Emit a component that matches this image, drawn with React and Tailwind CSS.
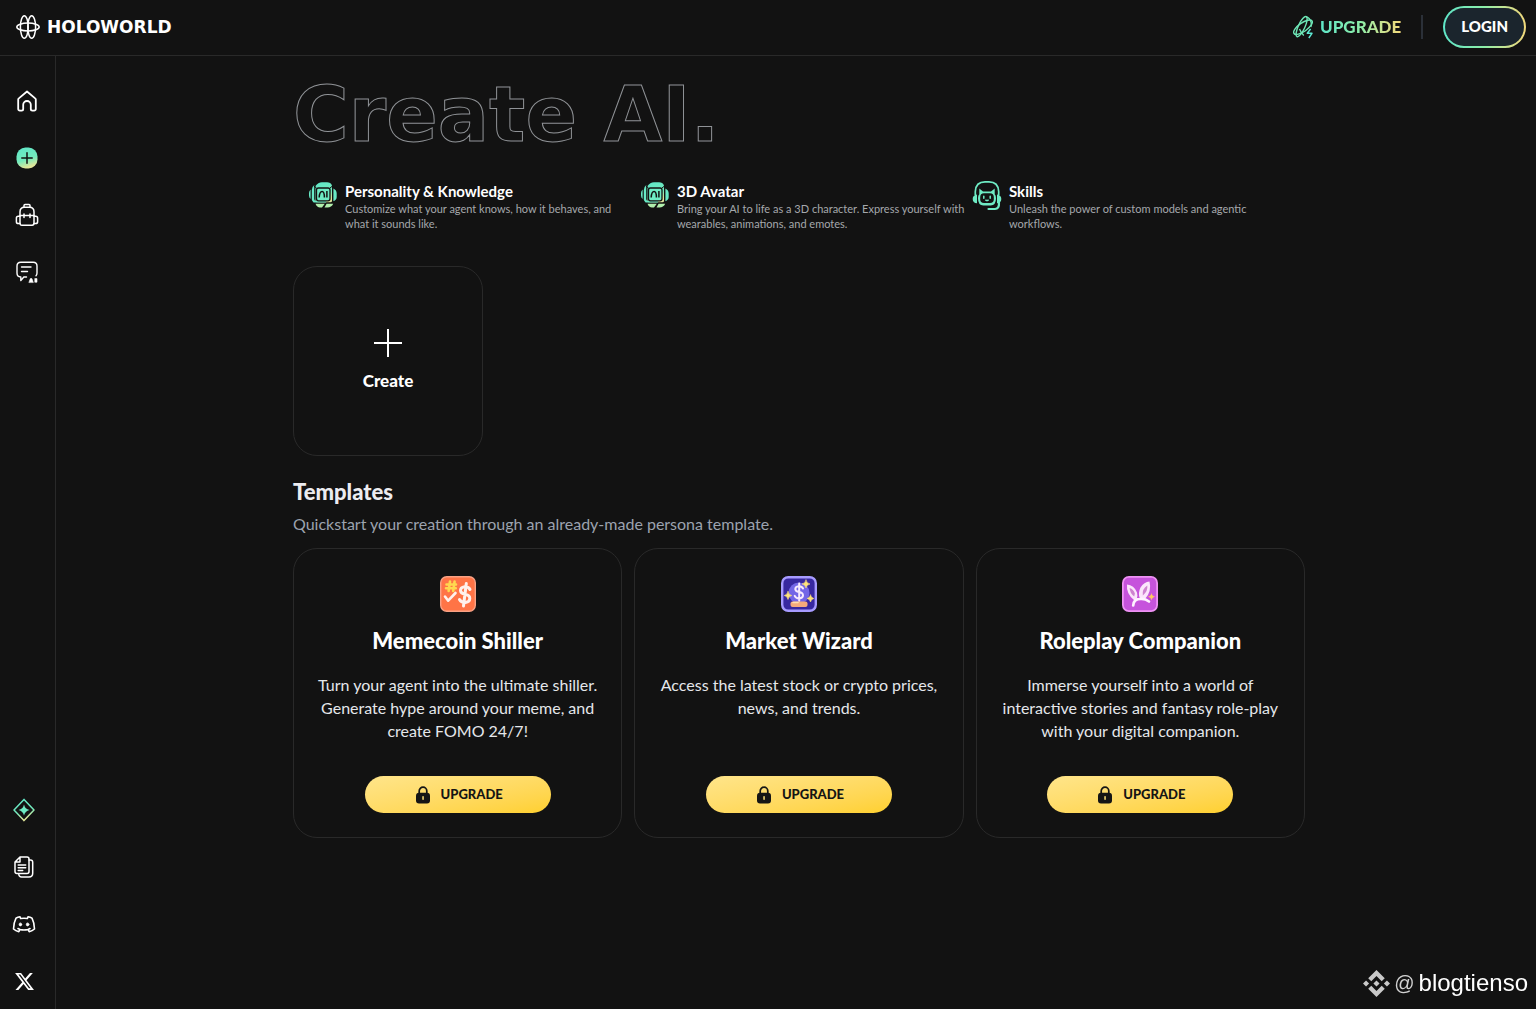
import React from "react";
import { FaXTwitter } from "react-icons/fa6";
import { SiBinance } from "react-icons/si";

const features = [
  {
    title: "Personality & Knowledge",
    text: "Customize what your agent knows, how it behaves, and what it sounds like.",
    Icon: ChipIcon,
  },
  {
    title: "3D Avatar",
    text: "Bring your AI to life as a 3D character. Express yourself with wearables, animations, and emotes.",
    Icon: ChipIcon,
  },
  {
    title: "Skills",
    text: "Unleash the power of custom models and agentic workflows.",
    Icon: BotIcon,
  },
];

const templates = [
  {
    title: "Memecoin Shiller",
    text: "Turn your agent into the ultimate shiller. Generate hype around your meme, and create FOMO 24/7!",
    Icon: MemecoinIcon,
  },
  {
    title: "Market Wizard",
    text: "Access the latest stock or crypto prices, news, and trends.",
    Icon: WizardIcon,
  },
  {
    title: "Roleplay Companion",
    text: "Immerse yourself into a world of interactive stories and fantasy role-play with your digital companion.",
    Icon: BunnyIcon,
  },
];

function Gradients() {
  return (
    <svg className="absolute h-0 w-0" aria-hidden="true">
      <defs>
        <linearGradient id="mint" x1="0" y1="0" x2="0.3" y2="1">
          <stop offset="0" stopColor="#5ee6c8" />
          <stop offset="0.65" stopColor="#74ebbd" />
          <stop offset="1" stopColor="#dfe69a" />
        </linearGradient>
      </defs>
    </svg>
  );
}

function LogoMark() {
  return (
    <svg className="h-6 w-6" viewBox="0 0 24 24" fill="none" stroke="white" strokeWidth="1.5">
      <ellipse cx="8.3" cy="12" rx="3.9" ry="11.2" />
      <ellipse cx="15.7" cy="12" rx="3.9" ry="11.2" />
      <ellipse cx="12" cy="12" rx="11.2" ry="4" />
    </svg>
  );
}

function UpgradeMark() {
  return (
    <svg className="h-6 w-6" viewBox="0 0 24 24" fill="none" stroke="#6ee7b7" strokeWidth="1.4">
      <ellipse cx="11" cy="12.2" rx="11" ry="4.3" transform="rotate(-35 11 12.2)" />
      <ellipse cx="9.6" cy="11.600" rx="3.3" ry="11" transform="rotate(25 9.600 11.600)" />
      <path d="M14.200 1.600Q18 3 19.200 7.500q.5 2.500-.4 4.500M11.800 20.500q-2.600-2.200-4.300-6.500" />
      <path d="M18.600 14l-3.400 4.300h4.800L16.800 23" strokeLinejoin="round" stroke="#5eead4" />
    </svg>
  );
}

function HomeIcon() {
  return (
    <svg className="h-6 w-6" viewBox="0 0 24 24" fill="none" stroke="white" strokeWidth="1.8" strokeLinejoin="round">
      <path d="M12 2.500L3.800 9.400a1.500 1.500 0 0 0-.6 1.200V20a1.600 1.600 0 0 0 1.600 1.600h1.800A1.600 1.600 0 0 0 8.200 20v-4.200a3.800 3.800 0 0 1 7.600 0V20a1.600 1.600 0 0 0 1.600 1.600h1.800a1.600 1.600 0 0 0 1.600-1.600v-9.400a1.500 1.500 0 0 0-.6-1.200z" />
    </svg>
  );
}

function AddIcon() {
  return (
    <svg className="h-6 w-6" viewBox="0 0 24 24">
      <rect x="1.500" y="1.500" width="21" height="21" rx="9" fill="url(#mint)" />
      <path d="M12 6.800v10.400M6.800 12h10.400" stroke="#121212" strokeWidth="1.500" strokeLinecap="round" />
    </svg>
  );
}

function BackpackIcon() {
  return (
    <svg className="h-6 w-6" viewBox="0 0 24 24" fill="none" stroke="white" strokeWidth="1.500" strokeLinejoin="round" strokeLinecap="round">
      <path d="M9 4.200V2.400q0-1 1-1h4q1 0 1 1v1.800" />
      <path d="M5 20.300V9q0-4.800 4.500-4.800h5Q19 4.200 19 9v11.300q0 1.900-1.900 1.900H6.900Q5 22.200 5 20.300z" />
      <path d="M5 13.200H3.300q-1.900 0-1.900 1.900v3.600q0 1.900 1.900 1.900H5M19 13.200h1.700q1.900 0 1.900 1.900v3.600q0 1.900-1.900 1.900H19" />
      <path d="M5 12.500h14M9 11v3.400M15 11v3.400" />
    </svg>
  );
}

function ChatIcon() {
  return (
    <svg className="h-6 w-6" viewBox="0 0 24 24" fill="none" stroke="white" strokeWidth="1.400" strokeLinejoin="round" strokeLinecap="round">
      <path d="M11.500 17H8.800l-3 3.600V17Q2 16.800 2 13V6q0-3.800 3.800-3.800h12.400Q22 2.200 22 6v7q0 1.800-1 2.800M6.500 7h9.500M6.500 11.500h6" />
      <path d="M14 22.200l1.300-3.600h1.600l1.300 3.600zM20 18.600h2v3.600h-2z" fill="white" strokeWidth=".6" />
    </svg>
  );
}

function DiamondIcon() {
  return (
    <svg className="h-6 w-6" viewBox="0 0 24 24" fill="none">
      <path d="M12 1.400L22 12 12 22.600 2 12z" stroke="url(#mint)" strokeWidth="1.500" strokeLinejoin="round" />
      <path d="M12 6.500q1 4.500 5.500 5.500-4.500 1-5.500 5.500-1-4.500-5.500-5.500 4.500-1 5.500-5.500z" fill="#6eebc4" />
    </svg>
  );
}

function DocsIcon() {
  return (
    <svg className="h-6 w-6" viewBox="0 0 24 24" fill="none" stroke="white" strokeWidth="1.500" strokeLinejoin="round" strokeLinecap="round">
      <path d="M8 2h7q2 0 2 2v12.500q0 2-2 2H5q-2 0-2-2V7zM8 2v5H3" />
      <path d="M17 5h1.500q2.200 0 2.200 2.200v11q0 3.700-3.700 3.700H9.500Q7 21.900 6.800 19.500" />
      <path d="M6.200 10h7.500M6.200 12.800h7.500M6.200 15.600h4.500" />
    </svg>
  );
}

function DiscordIcon() {
  return (
    <svg className="h-6 w-6" viewBox="0 0 24 24" fill="none" stroke="white" strokeWidth="1.600" strokeLinejoin="round" strokeLinecap="round">
      <path d="M8.600 6.500L8 4.800q-2.300.3-4 1.400-2.400 4.800-2.500 10.800 2.200 2 5.300 2.700l1.200-2.200q4 1 8 0l1.200 2.200q3.100-.7 5.300-2.700-.1-6-2.500-10.800-1.700-1.100-4-1.400l-.6 1.700q-3.400-.6-6.800 0zM8 17.500l-2-.9M16 17.500l2-.9" />
      <ellipse cx="8.400" cy="12.400" rx="1.300" ry="1.500" fill="white" strokeWidth=".7" />
      <ellipse cx="15.600" cy="12.400" rx="1.300" ry="1.500" fill="white" strokeWidth=".7" />
    </svg>
  );
}

function ChipIcon() {
  return (
    <svg className="h-7 w-7 shrink-0" viewBox="0 0 28 28" fill="none">
      <path d="M6.500 5Q9 1.200 13 1.200h5q3.700 0 5 3.300v15.300q0 1.500-1.500 1.500H8q-1.500 0-1.500-1.500z" fill="url(#mint)" />
      <path d="M5.200 4Q2.800 6 2.800 9v9.500q0 1 1.800 3h12.500v-1.800H6.700Q5.200 19.500 5.200 18zM1.600 8.500Q0 10 0 12v2.500q0 2 1.600 3.500zM24.400 7.500q3.300 1.500 3.300 5v3.500q0 3-3.300 4.300z" fill="#68e9c5" />
      <path d="M6.500 22.800h9.300L13 26.600h-2q-3 0-4.500-3.800zM17.600 22.800h6.600q-1.700 3.800-5.700 3.800h-3z" fill="#b0efac" />
      <rect x="7.500" y="7" width="13.500" height="12.800" rx="2" fill="#6eebc4" stroke="#121212" strokeWidth="1.300" />
      <path d="M10.200 16.500q.3-6 2.900-6 2.300 0 2.300 6M17.900 10v6.500" stroke="#121212" strokeWidth="1.500" />
      <path d="M7.500 7L4.800 5M21 7l2.500-2" stroke="#121212" strokeWidth="1" />
    </svg>
  );
}

function BotIcon() {
  return (
    <svg className="h-7 w-7 shrink-0 overflow-visible" viewBox="0 0 28 28" fill="none">
      <path d="M2.300 14V10.500Q2.800.9 12 .9h4q9.200 0 9.700 9.600V14" stroke="#6eebc4" strokeWidth="1.700" />
      <path d="M4 13.500v8.800Q-.3 22-.3 18t4.300-4.500zM24 13.500v8.800q4.300-.3 4.300-4.300T24 13.500z" fill="#6eebc4" />
      <path d="M6.300 7.500l3.700 3h8l3.700-3v5.800q1.300 1 1.300 4 0 7.200-5.400 7.200h-7.200Q5 24.500 5 17.300q0-3 1.300-4z" fill="#6eebc4" />
      <rect x="7.200" y="12.300" width="13.600" height="9.800" rx="3.800" fill="#121212" />
      <path d="M10.800 15.200v2M17.200 15.200v2M12.800 19.200q1.200.8 2.400 0" stroke="#6eebc4" strokeWidth="1.500" strokeLinecap="round" />
      <path d="M26 21.500q.3 6.500-4 6.500h-6.500" stroke="#6eebc4" strokeWidth="2.200" strokeLinecap="round" />
    </svg>
  );
}

function MemecoinIcon() {
  return (
    <svg className="h-9 w-9" viewBox="0 0 36 36" fill="none" strokeLinecap="round" strokeLinejoin="round">
      <rect x=".7" y=".7" width="34.600" height="34.600" rx="6" fill="#ff7446" stroke="#f9a184" strokeWidth="1.400" />
      <path d="M10 5.500l-1.400 9.500M14.600 5.500L13.200 15M6.500 8.500H16M6 12.200h9.800" stroke="#ffd84f" strokeWidth="2.600" />
      <path d="M5 20.500l3.200 4.200L15.500 17" stroke="#fff1ec" strokeWidth="2.600" />
      <path d="M30 13.500q-1.500-3.200-5.300-2.800-4.400.6-4.200 4 .2 2.800 4.500 3.600 4.800.9 4.800 4.200-.1 3.400-4.300 4-4.200.3-6-3M26.300 7.500L23.500 30" stroke="#fff1ec" strokeWidth="3" />
    </svg>
  );
}

function WizardIcon() {
  return (
    <svg className="h-9 w-9" viewBox="0 0 36 36" fill="none" strokeLinecap="round">
      <rect x="1.200" y="1.200" width="33.600" height="33.600" rx="6" fill="#3828a0" stroke="#a79bff" strokeWidth="2.400" />
      <circle cx="18" cy="17" r="10.500" fill="#7466e6" />
      <path d="M22 12.500q-1.200-2.500-4.200-2.300-3.600.3-3.500 3 .2 2.200 3.700 2.900 4 .7 4 3.300-.1 2.700-3.700 3-3.400.1-4.600-2.500M18.200 7.500V25" stroke="#f7eaff" strokeWidth="2" />
      <rect x="9.500" y="25.500" width="17" height="5.500" rx="2" fill="#f5aa7b" />
      <path d="M12 26.500h5" stroke="#ffdfae" strokeWidth="1.600" />
      <path d="M25 4q.6 3.500 4 4-3.400.5-4 4-.6-3.500-4-4 3.400-.5 4-4zM7 15.500q.6 3.400 3.800 4-3.200.6-3.800 4-.6-3.400-3.800-4 3.200-.6 3.800-4zM29.500 19q.5 3 3.300 3.500-2.800.5-3.300 3.500-.5-3-3.300-3.500 2.800-.5 3.300-3.500z" fill="#ffe37a" stroke="#ffe37a" strokeWidth=".6" />
    </svg>
  );
}

function BunnyIcon() {
  return (
    <svg className="h-9 w-9" viewBox="0 0 36 36" fill="none" strokeLinecap="round">
      <rect x=".9" y=".9" width="34.200" height="34.200" rx="6" fill="#c653dc" stroke="#ee92f4" strokeWidth="1.800" />
      <path d="M12.500 24.500Q4 18 5 8.500q7 .5 10 8 1.200 4-.5 7zM18 23q-2.500-5.500.5-11.500Q22 6 27.500 5.500q2.500 10-4.500 17.500z" fill="#fbe5fb" />
      <path d="M12.200 20.500Q7.800 17 7.600 12q3.800 1 5.300 5.500zM20.800 19.500q-1-6.500 4.500-10 .8 5.500-4.500 10z" fill="#ce82cf" />
      <path d="M11.200 29.500q.3-6.500 7.500-6.600 4.600-.3 8.300 2.600" stroke="#fff2ff" strokeWidth="2.700" />
      <path d="M29.500 17q.6 3.200 3.600 3.800-3 .6-3.600 3.800-.6-3.200-3.600-3.800 3-.6 3.600-3.800z" fill="#ffc862" />
    </svg>
  );
}

function LockIcon() {
  return (
    <svg className="h-5 w-5" viewBox="0 0 20 20" fill="none">
      <path d="M6.200 9V6a3.800 3.800 0 0 1 7.600 0v3" stroke="#151515" strokeWidth="1.700" />
      <rect x="3" y="7.700" width="14" height="10.800" rx="3" fill="#151515" />
      <rect x="9.300" y="11" width="1.500" height="4" rx=".7" fill="#ffe078" />
    </svg>
  );
}

function NavLink({ label, children }) {
  return (
    <a href="#" aria-label={label} className="flex h-6 w-6 items-center justify-center text-white">
      {children}
    </a>
  );
}

export default function App() {
  return (
    <div className="flex min-h-screen flex-col bg-[#121212] font-[Lato,sans-serif] text-white">
      <Gradients />
      <header className="flex h-14 items-center justify-between border-b border-[#292929] pb-0.5 pl-4 pr-2.5">
        <a href="#" className="flex items-center gap-[7px]">
          <LogoMark />
          <span className="font-['DejaVu_Sans',sans-serif] text-[17px] font-bold leading-6">HOLOWORLD</span>
        </a>
        <div className="flex items-center">
          <a href="#" className="flex items-center gap-1">
            <UpgradeMark />
            <span className="bg-linear-to-r from-[#5ee6c8] via-[#8ceea8] to-[#f2d87a] bg-clip-text text-[17px] font-black text-transparent">
              UPGRADE
            </span>
          </a>
          <div className="mx-5 h-6 w-0.5 bg-[#2b3038]" />
          <button className="rounded-full bg-linear-to-r from-[#5ee6c8] via-[#8ceea8] to-[#f2d87a] p-0.5">
            <span className="flex h-[38px] items-center rounded-full bg-[#1b252d] px-4 text-[15px] font-black">LOGIN</span>
          </button>
        </div>
      </header>

      <div className="flex flex-1">
        <aside className="flex w-14 flex-col justify-between border-r border-[#292929] pb-4 pt-[33px]">
          <nav className="flex flex-col gap-[33px] pl-[15px]">
            <NavLink label="Home"><HomeIcon /></NavLink>
            <NavLink label="Create"><AddIcon /></NavLink>
            <NavLink label="Inventory"><BackpackIcon /></NavLink>
            <NavLink label="Chats"><ChatIcon /></NavLink>
          </nav>
          <nav className="flex flex-col gap-[33px] pl-3">
            <NavLink label="Premium"><DiamondIcon /></NavLink>
            <NavLink label="Docs"><DocsIcon /></NavLink>
            <NavLink label="Discord"><DiscordIcon /></NavLink>
            <NavLink label="X"><FaXTwitter size={21} /></NavLink>
          </nav>
        </aside>

        <main className="flex-1 pl-1.5">
          <div className="mx-auto max-w-[1012px] pt-5">
            <h1 className="font-['DejaVu_Sans',sans-serif] text-[76px] font-bold leading-[78px] text-transparent [-webkit-text-stroke:1px_#8f9296]">
              Create AI.
            </h1>

            <ul className="mt-[27px] grid grid-cols-3 pl-4">
              {features.map(({ title, text, Icon }) => (
                <li key={title} className="flex gap-2 pr-1">
                  <Icon />
                  <div>
                    <h2 className="text-[15px] font-bold leading-5">{title}</h2>
                    <p className="text-[11px] leading-[15px] text-[#a5a8ac]">{text}</p>
                  </div>
                </li>
              ))}
            </ul>

            <button className="mt-[35px] flex h-[190px] w-[190px] flex-col items-center justify-center gap-3 rounded-3xl border border-[#292929]">
              <svg className="h-7 w-7" viewBox="0 0 28 28" stroke="white" strokeWidth="2">
                <path d="M14 0v28M0 14h28" />
              </svg>
              <span className="text-[17px] font-black leading-6">Create</span>
            </button>

            <h2 className="mt-6 text-[22px] font-black leading-6 text-[#ececf0]">Templates</h2>
            <p className="mt-2 text-base leading-6 text-[#9ca3af]">
              Quickstart your creation through an already-made persona template.
            </p>

            <div className="mt-3 grid grid-cols-3 gap-3">
              {templates.map(({ title, text, Icon }) => (
                <article
                  key={title}
                  className="flex h-[290px] flex-col items-center rounded-3xl border border-[#292929] px-6 pb-6 pt-[27px] text-center"
                >
                  <Icon />
                  <h3 className="mt-[15px] text-[22px] font-black leading-7">{title}</h3>
                  <p className="mt-[18px] text-base leading-[23px] text-[#e5e7eb]">{text}</p>
                  <button className="mt-auto flex h-[37px] w-2/3 items-center justify-center gap-2 rounded-full bg-linear-to-br from-[#ffe58a] to-[#ffd02c] text-[13px] font-black text-[#151515]">
                    <LockIcon />
                    UPGRADE
                  </button>
                </article>
              ))}
            </div>
          </div>
        </main>
      </div>

      <div className="fixed bottom-3 right-2 flex items-center gap-1 font-['Liberation_Sans',sans-serif] text-2xl leading-7">
        <SiBinance size={27} color="#c9c9c9" />
        <span className="text-xl text-[#d2d2d2]">@</span>
        <span>blogtienso</span>
      </div>
    </div>
  );
}
